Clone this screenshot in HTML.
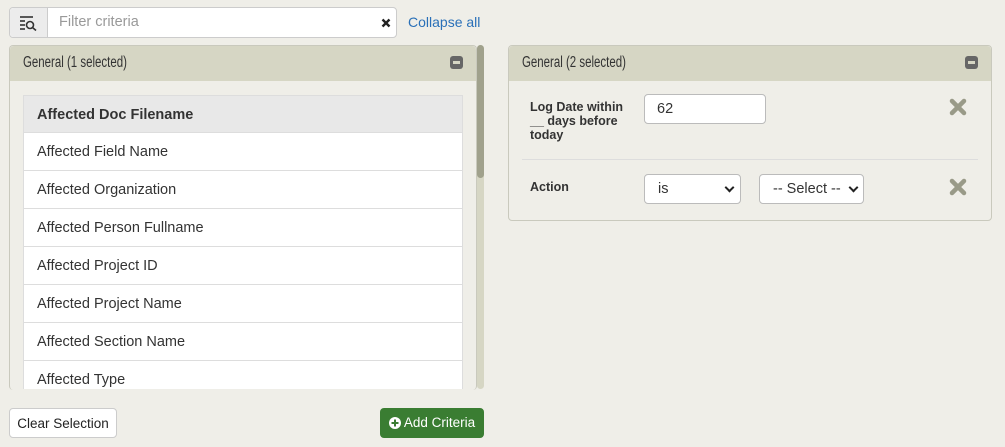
<!DOCTYPE html>
<html><head><style>
*{box-sizing:border-box;margin:0;padding:0}
body{width:1005px;height:447px;background:#efeee8;font-family:"Liberation Sans",sans-serif;position:relative;overflow:hidden;color:#333}
.abs{position:absolute}
.fg{left:9px;top:7px;width:388px;height:31px;border:1px solid #ccc;border-radius:4px;background:#fff}
.fgi{left:0;top:0;width:38px;height:29px;background:#ececec;border-right:1px solid #ccc;border-radius:4px 0 0 4px}
.panel{border:1px solid #c9c9bd;border-radius:4px;background:#efeee8}
.ph{position:absolute;left:0;top:0;right:0;height:35px;background:#d6d6c4;border-radius:4px 4px 0 0}
.pt{position:absolute;left:13px;top:8px;font-size:15.5px;color:#333;transform:scaleX(0.74);transform-origin:0 0;white-space:nowrap}
.min{position:absolute;top:10px;width:13px;height:13px;background:#666;border-radius:3px}
.min:after{content:"";position:absolute;left:3px;top:5px;width:7px;height:3px;background:#d6d6c4}
.item{position:absolute;left:23px;width:440px;height:38px;border:1px solid #ddd;border-top:none;background:#fff;font-size:14.5px;padding:11px 0 0 13px;color:#333}
.inp{background:#fff;border:1px solid #bbb;border-radius:4px;font-size:14.5px;color:#333}
.lbl{font-size:12.5px;font-weight:bold;color:#333;line-height:14px}
.chev{position:absolute;top:9px;width:7px;height:7px;border-right:2px solid #222;border-bottom:2px solid #222;transform:rotate(45deg)}
.btn{border-radius:4px;font-size:13.5px;text-align:center;padding-top:7px}
</style></head><body>
<div class="abs fg"><div class="abs fgi">
<svg class="abs" style="left:9px;top:7px" width="20" height="16" viewBox="0 0 20 16"><g stroke="#333" stroke-width="1.6" fill="none"><line x1="1" y1="2" x2="14" y2="2"/><line x1="1" y1="6" x2="6" y2="6"/><line x1="1" y1="10" x2="6" y2="10"/><line x1="1" y1="14" x2="6" y2="14"/><circle cx="11" cy="10" r="3.5"/><line x1="13.5" y1="12.5" x2="17" y2="15.5"/></g></svg>
</div>
<div class="abs" style="left:49px;top:6px;font-size:14.5px;color:#999">Filter criteria</div>
<svg class="abs" style="left:371px;top:10px" width="10" height="10" viewBox="0 0 10 10"><path d="M1.5 1.5L8.5 8.5M8.5 1.5L1.5 8.5" stroke="#222" stroke-width="2.4"/></svg>
</div>
<div class="abs" style="left:408px;top:14px;font-size:14px;color:#2a70b8">Collapse all</div>

<div class="abs panel" style="left:9px;top:45px;width:468px;height:345px;border-bottom:none;overflow:hidden">
<div class="ph"><div class="pt">General (1 selected)</div><div class="min" style="left:440px"></div></div>
</div>
<div class="abs" style="left:477px;top:45px;width:7px;height:344px;background:#d6d6c4;border-radius:4px"></div>
<div class="abs" style="left:477px;top:45px;width:7px;height:133px;background:#a0a18c;border-radius:4px"></div>
<div class="abs" style="left:23px;top:95px;width:440px;height:38px;border:1px solid #ddd;background:#e8e8e8;font-size:14.5px;font-weight:bold;padding:11px 0 0 13px;color:#333">Affected Doc Filename</div>
<div class="item" style="top:133px">Affected Field Name</div>
<div class="item" style="top:171px">Affected Organization</div>
<div class="item" style="top:209px">Affected Person Fullname</div>
<div class="item" style="top:247px">Affected Project ID</div>
<div class="item" style="top:285px">Affected Project Name</div>
<div class="item" style="top:323px">Affected Section Name</div>
<div class="abs" style="left:23px;top:361px;width:440px;height:28px;border-left:1px solid #ddd;border-right:1px solid #ddd;background:#fff;font-size:14.5px;padding:11px 0 0 13px;overflow:hidden">Affected Type</div>

<div class="abs panel" style="left:508px;top:45px;width:484px;height:176px">
<div class="ph"><div class="pt">General (2 selected)</div><div class="min" style="left:456px"></div></div>
</div>
<div class="abs lbl" style="left:530px;top:100px">Log Date within<br>__ days before<br>today</div>
<div class="abs inp" style="left:644px;top:94px;width:122px;height:30px;padding:6px 0 0 12px">62</div>
<svg class="abs" style="left:949px;top:98px" width="18" height="18" viewBox="0 0 18 18"><path d="M3 3L15 15M15 3L3 15" stroke="#999a88" stroke-width="4.5" stroke-linecap="round"/></svg>
<div class="abs" style="left:522px;top:159px;width:456px;height:1px;background:#ddd"></div>
<div class="abs lbl" style="left:530px;top:180px">Action</div>
<div class="abs inp" style="left:644px;top:174px;width:97px;height:30px;padding:6px 0 0 13px">is<div class="chev" style="left:81px"></div></div>
<div class="abs inp" style="left:759px;top:174px;width:105px;height:30px;padding:6px 0 0 13px">-- Select --<div class="chev" style="left:90px"></div></div>
<svg class="abs" style="left:949px;top:178px" width="18" height="18" viewBox="0 0 18 18"><path d="M3 3L15 15M15 3L3 15" stroke="#999a88" stroke-width="4.5" stroke-linecap="round"/></svg>

<div class="abs btn" style="left:9px;top:408px;width:108px;height:30px;background:#fff;border:1px solid #ccc;color:#222">Clear Selection</div>
<div class="abs btn" style="left:380px;top:408px;width:104px;height:30px;background:#3a7d32;color:#fff"><svg style="vertical-align:-2px" width="12" height="12" viewBox="0 0 12 12"><circle cx="6" cy="6" r="6" fill="#fff"/><path d="M6 2.5V9.5M2.5 6H9.5" stroke="#3a7d32" stroke-width="2"/></svg> Add Criteria</div>
</body></html>
